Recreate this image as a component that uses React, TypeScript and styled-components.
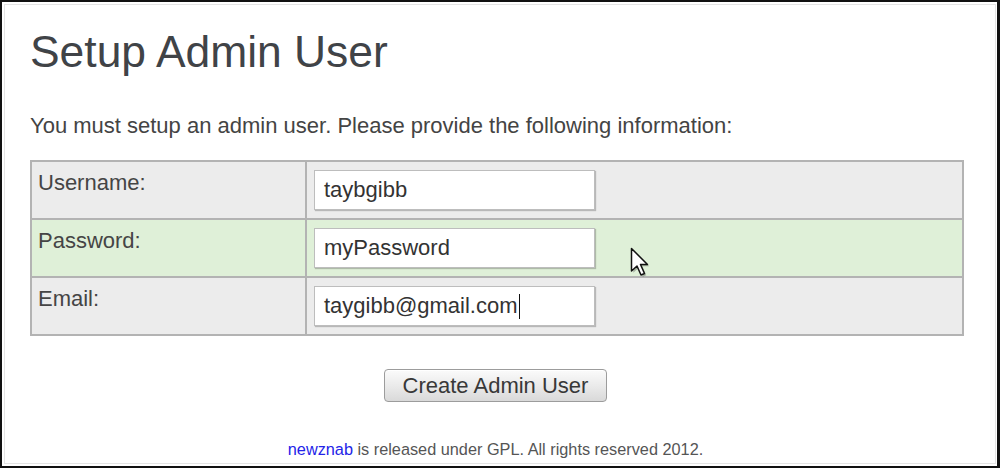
import styled, { createGlobalStyle } from "styled-components";

const GlobalStyle = createGlobalStyle`
  html, body {
    margin: 0;
    padding: 0;
    background: #fff;
  }
  body {
    font-family: "Liberation Sans", Arial, sans-serif;
  }
`;

const Frame = styled.div`
  box-sizing: border-box;
  width: 1000px;
  height: 468px;
  border: solid #111;
  border-width: 2px 3px 2px 2px;
  padding: 2px 1px 2px 2px;
  background: #fff;
`;

const Page = styled.div`
  position: relative;
  box-sizing: border-box;
  height: 100%;
  border: 1px solid #e4e4e4;
  padding: 0 31px 0 25px;
`;

const Title = styled.h1`
  margin: 22px 0 0;
  font-size: 44.4px;
  font-weight: normal;
  line-height: 50px;
  color: #404347;
`;

const Intro = styled.p`
  margin: 36px 0 0;
  font-size: 22px;
  line-height: 25px;
  color: #444;
`;

const FormTable = styled.table`
  width: 100%;
  margin-top: 22px;
  table-layout: fixed;
  border-collapse: separate;
  border-spacing: 0;
  border: 1px solid #b3b3b3;
`;

const Row = styled.tr<{ $highlight?: boolean }>`
  background: ${(p) => (p.$highlight ? "#dff0d8" : "#ececec")};
`;

const LabelCell = styled.td`
  box-sizing: border-box;
  width: 275px;
  border: 1px solid #b3b3b3;
  padding: 8px 6px 8px;
  vertical-align: top;
  font-size: 22px;
  line-height: 25px;
  color: #454545;
`;

const ValueCell = styled.td`
  border: 1px solid #b3b3b3;
  padding: 8px 7px 8px;
  vertical-align: top;
`;

const Field = styled.div`
  box-sizing: border-box;
  width: 281px;
  height: 40px;
  padding: 6px 9px 7px;
  border: 1px solid #bdbdbd;
  box-shadow: 1px 1px 1px rgba(0, 0, 0, 0.22);
  background: #fff;
  font-size: 22px;
  line-height: 25px;
  color: #333;
  white-space: nowrap;
`;

const Caret = styled.span`
  display: inline-block;
  width: 1px;
  height: 25px;
  margin-left: 1px;
  vertical-align: -6px;
  background: #111;
`;

const ButtonRow = styled.div`
  display: flex;
  justify-content: center;
  margin-top: 33px;
`;

const SubmitButton = styled.button`
  font-family: "Liberation Sans", Arial, sans-serif;
  font-size: 22px;
  line-height: 25px;
  padding: 3px 17.5px;
  margin-right: 3px;
  border: 1px solid #9c9c9c;
  border-radius: 4px;
  color: #383838;
  background: linear-gradient(#fbfbfb, #e9e9e9 55%, #d9d9d9);
  box-shadow: inset 0 1px 0 #fff;
`;

const Footer = styled.p`
  margin: 38px 3px 0 0;
  text-align: center;
  font-size: 16.3px;
  line-height: 19px;
  color: #555;
`;

const FooterLink = styled.a`
  color: #2323e8;
  text-decoration: none;
`;

const Pointer = styled.svg`
  position: absolute;
  left: 625px;
  top: 242px;
  pointer-events: none;
`;

const fields = [
  { label: "Username:", value: "taybgibb" },
  { label: "Password:", value: "myPassword", highlight: true },
  { label: "Email:", value: "taygibb@gmail.com", caret: true },
];

export default function App() {
  return (
    <>
      <GlobalStyle />
      <Frame>
        <Page>
          <Title>Setup Admin User</Title>
          <Intro>
            You must setup an admin user. Please provide the following
            information:
          </Intro>
          <FormTable>
            <tbody>
              {fields.map((f) => (
                <Row key={f.label} $highlight={f.highlight}>
                  <LabelCell>{f.label}</LabelCell>
                  <ValueCell>
                    <Field>
                      {f.value}
                      {f.caret && <Caret />}
                    </Field>
                  </ValueCell>
                </Row>
              ))}
            </tbody>
          </FormTable>
          <ButtonRow>
            <SubmitButton type="button">Create Admin User</SubmitButton>
          </ButtonRow>
          <Footer>
            <FooterLink href="#">newznab</FooterLink> is released under GPL.
            All rights reserved 2012.
          </Footer>
          <Pointer width="20" height="31" viewBox="0 0 20 31">
            <path
              d="M2.5 2.5 L2.5 25 L8 20 L12 29 L15.5 27.5 L11.5 18.5 L18.5 18.5 Z"
              fill="rgba(0,0,0,0.25)"
              transform="translate(0.8 0.8)"
            />
            <path
              d="M1.5 1.5 L1.5 24 L7 19 L11 28 L14.5 26.5 L10.5 17.5 L17.5 17.5 Z"
              fill="#fff"
              stroke="#111"
              strokeWidth="1.5"
              strokeLinejoin="round"
            />
          </Pointer>
        </Page>
      </Frame>
    </>
  );
}
